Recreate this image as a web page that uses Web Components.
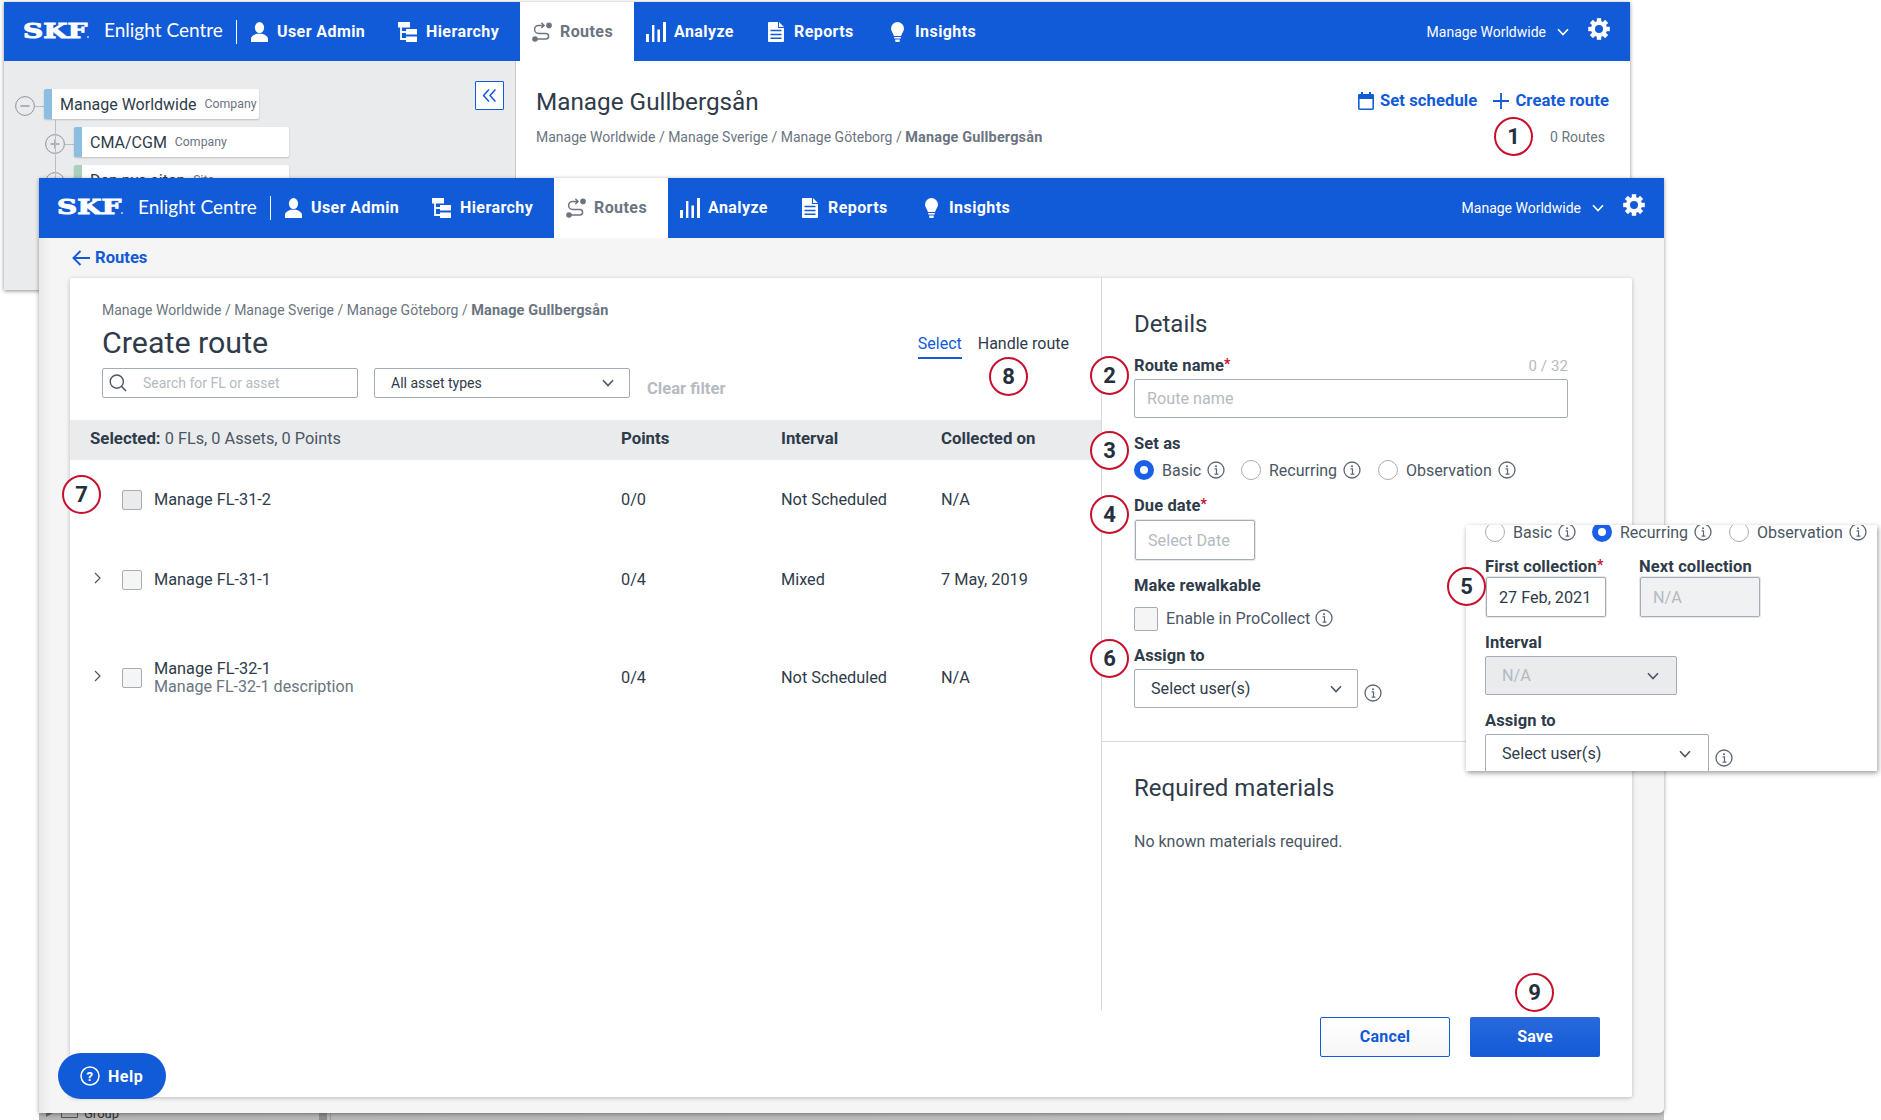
<!DOCTYPE html>
<html lang="en">
<head>
<meta charset="utf-8">
<title>Create route</title>
<style>
  html, body { margin: 0; background: #fff; }
  body { position: relative; width: 1881px; height: 1120px; overflow: hidden; font: 16px Roboto, "Liberation Sans", sans-serif; color: #2f3b4a; }
  .win { position: absolute; }
</style>
</head>
<body>

<!-- sliver of the third screenshot under the front window -->
<under-strip class="win" style="left:39px;top:1106px;width:1625px;height:14px"></under-strip>

<back-window class="win" style="left:4px;top:2px;width:1626px;height:288px"></back-window>

<create-route class="win" style="left:39px;top:178px;width:1625px;height:935px"></create-route>

<recurring-panel class="win" style="left:1466px;top:525px;width:411px;height:246px"></recurring-panel>

<note-badge n="1" style="left:1494px;top:117px"></note-badge>
<note-badge n="2" style="left:1090px;top:356px"></note-badge>
<note-badge n="3" style="left:1090px;top:431px"></note-badge>
<note-badge n="4" style="left:1090px;top:495px"></note-badge>
<note-badge n="5" style="left:1447px;top:567px"></note-badge>
<note-badge n="6" style="left:1090px;top:639px"></note-badge>
<note-badge n="7" style="left:62px;top:475px"></note-badge>
<note-badge n="8" style="left:989px;top:357px"></note-badge>
<note-badge n="9" style="left:1515px;top:973px"></note-badge>

<script>
const ICONS = {
  user: '<svg viewBox="0 0 17 20"><ellipse cx="8.5" cy="5.6" rx="4.6" ry="5.6" fill="currentColor"/><path d="M0 20v-3.2c0-2.6 3.4-4 5.6-5h5.8c2.2 1 5.6 2.4 5.6 5V20z" fill="currentColor"/></svg>',
  hierarchy: '<svg viewBox="0 0 20 20"><rect width="12" height="5.5" fill="currentColor"/><path d="M3 5v12h6M3 10h6" fill="none" stroke="currentColor" stroke-width="1.8"/><rect x="8" y="7" width="11" height="5.5" fill="currentColor"/><rect x="8" y="14.5" width="11" height="5.5" fill="currentColor"/></svg>',
  routes: '<svg viewBox="0 0 20 20"><circle cx="17" cy="3.4" r="2.8" fill="currentColor"/><circle cx="3" cy="17" r="2.8" fill="currentColor"/><path d="M12 3.4H6.6a4 4 0 0 0 0 8h7.2a2.8 2.8 0 0 1 0 5.6H5M9.4 .8 12 3.4 9.4 6" fill="none" stroke="currentColor" stroke-width="1.5"/></svg>',
  analyze: '<svg viewBox="0 0 20 20"><path d="M0 12h3v8H0zM6 3h2.4v17H6zM11.4 7.5h2.6V20h-2.6zM17 0h3v20h-3z" fill="currentColor"/></svg>',
  reports: '<svg viewBox="0 0 16 20"><path d="M1 0h9v6h6v13a1 1 0 0 1-1 1H1a1 1 0 0 1-1-1V1a1 1 0 0 1 1-1zM11 0l5 5h-5z" fill="currentColor"/><path d="M2.5 8.6h11M2.5 12.4h11M2.5 16.2h11" stroke="#115ad8" stroke-width="1.5"/></svg>',
  insights: '<svg viewBox="0 0 13 20"><path d="M6.5 0a6.5 6.5 0 0 1 6.5 6.5c0 3-2.3 4.5-2.9 7.5H2.900C2.300 11 0 9.500 0 6.500A6.500 6.500 0 0 1 6.500 0zM3.200 15h6.600v1.500H3.200zM4.200 17.500h4.600V19a1 1 0 0 1-1 1H5.200a1 1 0 0 1-1-1z" fill="currentColor"/></svg>',
  gear: '<svg viewBox="-11 -11 22 22"><circle r="6" fill="none" stroke="currentColor" stroke-width="4"/>' +
    [0, 45, 90, 135, 180, 225, 270, 315].map(a => `<rect x="-2.200" y="-10.800" width="4.400" height="4.500" fill="currentColor" transform="rotate(${a})"/>`).join('') + '</svg>',
  chevron: '<svg viewBox="0 0 12 8"><path d="M1 1.200 6 6.500 11 1.200" fill="none" stroke="currentColor" stroke-width="1.600"/></svg>',
  right: '<svg viewBox="0 0 7 12"><path d="M1 1l5 5-5 5" fill="none" stroke="currentColor" stroke-width="1.200"/></svg>',
  info: '<svg viewBox="0 0 18 18"><circle cx="9" cy="9" r="8" fill="none" stroke="currentColor" stroke-width="1.300"/><circle cx="9" cy="5.200" r="1" fill="currentColor"/><path d="M7.600 7.800H9.500V13M7.600 13.200h3.800" fill="none" stroke="currentColor" stroke-width="1.200"/></svg>',
  search: '<svg viewBox="0 0 18 18"><circle cx="7.800" cy="7.600" r="6.600" fill="none" stroke="currentColor" stroke-width="1.400"/><path d="M12.600 12.500 17 17" stroke="currentColor" stroke-width="1.500"/></svg>',
  calendar: '<svg viewBox="0 0 16 18"><rect x=".8" y="2.800" width="14.400" height="14.400" rx="1" fill="none" stroke="currentColor" stroke-width="1.600"/><path d="M0 2.500h16V7H0zM3 0h2v3H3zM11 0h2v3h-2z" fill="currentColor"/></svg>',
  plus: '<svg viewBox="0 0 16 16"><path d="M8 0v16M0 8h16" stroke="currentColor" stroke-width="1.800"/></svg>',
  back: '<svg viewBox="0 0 18 16"><path d="M18 8H1.500M8.500 1 1.500 8l7 7" fill="none" stroke="currentColor" stroke-width="1.900"/></svg>',
  collapse: '<svg viewBox="0 0 14 14"><path d="M6.500 1.500 1.500 7l5 5.500M12.500 1.500 7.500 7l5 5.500" fill="none" stroke="currentColor" stroke-width="1.400"/></svg>'
};

class UiIcon extends HTMLElement {
  connectedCallback() {
    const w = this.getAttribute('w') || 16;
    const h = this.getAttribute('h') || w;
    this.attachShadow({ mode: 'open' }).innerHTML = `
      <style>
        :host { display: inline-flex; flex: none; width: ${w}px; height: ${h}px; }
        svg { width: 100%; height: 100%; display: block; }
      </style>${ICONS[this.getAttribute('name')]}`;
  }
}
customElements.define('ui-icon', UiIcon);

class NoteBadge extends HTMLElement {
  connectedCallback() {
    this.attachShadow({ mode: 'open' }).innerHTML = `
      <style>
        :host {
          position: absolute; width: 39px; height: 39px; box-sizing: border-box;
          display: flex; align-items: center; justify-content: center;
          border: 2px solid #c8102e; border-radius: 50%; background: #fff;
          font: 700 22px/1 Roboto, sans-serif; color: #26303d;
        }
      </style>${this.getAttribute('n')}`;
  }
}
customElements.define('note-badge', NoteBadge);

class NavItem extends HTMLElement {
  connectedCallback() {
    const w = this.getAttribute('iw') || 20;
    this.attachShadow({ mode: 'open' }).innerHTML = `
      <style>
        :host { display: flex; align-items: center; height: 100%; box-sizing: border-box; flex: none; white-space: nowrap; }
        :host([active]) { background: #fff; color: #6b7480; }
        span { padding-bottom: 1px; }
      </style>
      <ui-icon name="${this.getAttribute('icon')}" w="${w}" h="20"></ui-icon>
      <span><slot></slot></span>`;
  }
}
customElements.define('nav-item', NavItem);

class SkfNav extends HTMLElement {
  connectedCallback() {
    this.attachShadow({ mode: 'open' }).innerHTML = `
      <style>
        :host {
          display: flex; align-items: center; box-sizing: border-box; flex: none;
          height: var(--nav-h, 59px); padding: 0 var(--nav-pad, 20px);
          background: #115ad8; color: #fff;
          font: 700 16px Roboto, sans-serif; letter-spacing: .42px;
        }
        .logo { position: relative; width: 64px; height: 16px; flex: none; margin-top: -2px; }
        .logo span {
          display: block; font: 700 21px/16px "DejaVu Serif", serif; letter-spacing: 0;
          transform: scaleX(1.330); transform-origin: 0 50%; margin-left: -1px;
          -webkit-text-stroke: 1px #fff; white-space: nowrap;
        }
        .logo i { position: absolute; right: -1px; bottom: 1px; width: 2px; height: 2px; background: #c9d8f5; border-radius: 50%; }
        .name { margin: 0 0 4px 16px; width: 119px; flex: none; font: 400 19px Lato, sans-serif; letter-spacing: 0; white-space: nowrap; }
        .sep { margin-left: 13px; width: 1px; height: 24px; background: #fff; flex: none; }
        .users { margin-left: 14px; width: 114px; gap: 9px; }
        .hier { margin-left: 33px; width: 101px; gap: 8px; }
        .routes { margin-left: 21px; width: 114px; padding-left: 12px; gap: 8px; }
        .analyze { margin-left: 12px; width: 88px; gap: 8px; }
        .reports { margin-left: 34px; width: 87px; gap: 10px; }
        .insights { margin-left: 36px; width: 86px; gap: 11px; }
        .org { margin-left: auto; font: 400 14px Roboto, sans-serif; letter-spacing: 0; }
        .chev { margin: 0 19px 0 11px; }
        .gear { margin-top: -6px; }
      </style>
      <div class="logo"><span>SKF</span><i></i></div>
      <span class="name">Enlight Centre</span>
      <span class="sep"></span>
      <nav-item class="users" icon="user" iw="17">User Admin</nav-item>
      <nav-item class="hier" icon="hierarchy">Hierarchy</nav-item>
      <nav-item class="routes" icon="routes" active>Routes</nav-item>
      <nav-item class="analyze" icon="analyze">Analyze</nav-item>
      <nav-item class="reports" icon="reports" iw="16">Reports</nav-item>
      <nav-item class="insights" icon="insights" iw="13">Insights</nav-item>
      <span class="org">Manage Worldwide</span>
      <ui-icon class="chev" name="chevron" w="12" h="8"></ui-icon>
      <ui-icon class="gear" name="gear" w="22"></ui-icon>`;
  }
}
customElements.define('skf-nav', SkfNav);

class TreeNode extends HTMLElement {
  connectedCallback() {
    const tag = this.getAttribute('toggle') || '+';
    const strip = this.getAttribute('strip') || '#8bbee0';
    const bar = tag === '-' ? '<path d="M5.500 10h9" stroke="#9aa1aa" stroke-width="1.600"/>' :
      '<path d="M5.500 10h9M10 5.500v9" stroke="#9aa1aa" stroke-width="1.600"/>';
    this.attachShadow({ mode: 'open' }).innerHTML = `
      <style>
        :host { display: flex; align-items: center; height: 30px; }
        svg { width: 20px; height: 20px; flex: none; margin-top: 4px; }
        .link { width: 9px; height: 1px; background: #b9bec5; flex: none; margin-top: 4px; }
        .card {
          display: flex; align-items: center; height: 30px; width: var(--w, 215px); box-sizing: border-box;
          padding-left: 8px; gap: 8px; background: #fff; border-left: 8px solid ${strip}; border-radius: 2px;
          box-shadow: 0 1px 2px rgba(0,0,0,.2); color: #2f3b4a; font-size: 16px; white-space: nowrap;
        }
        small { font-size: 12.300px; color: #6b7480; }
      </style>
      <svg viewBox="0 0 20 20"><circle cx="10" cy="10" r="9.400" fill="#e9ebed" stroke="#8d949d"/>${bar}</svg>
      <span class="link"></span>
      <div class="card"><slot></slot><small>${this.getAttribute('kind')}</small></div>`;
  }
}
customElements.define('tree-node', TreeNode);

class BackWindow extends HTMLElement {
  connectedCallback() {
    this.attachShadow({ mode: 'open' }).innerHTML = `
      <style>
        :host { display: flex; flex-direction: column; background: #fff; box-shadow: 0 1px 4px rgba(0,0,0,.45); font-family: Roboto, sans-serif; color: #2f3b4a; }
        .body { display: flex; flex: 1; min-height: 0; }
        .side { position: relative; width: 512px; flex: none; box-sizing: border-box; padding: 28px 0 0 11px; background: #e9ebed; border-right: 1px solid #c6cacf; overflow: hidden; }
        .rail { position: absolute; left: 50.500px; top: 58px; width: 1px; height: 60px; background: #b9bec5; }
        tree-node + tree-node { margin: 8px 0 0 30px; }
        .collapse { position: absolute; left: 471px; top: 20px; width: 29px; height: 29px; box-sizing: border-box; display: flex; align-items: center; justify-content: center; background: #fff; border: 1px solid #115ad8; color: #115ad8; border-radius: 1px; }
        .main { flex: 1; display: flex; justify-content: space-between; padding: 27px 21px 0 20px; }
        h1 { margin: 0; font: 400 24.300px/28px Roboto, sans-serif; }
        .crumb { margin-top: 12px; font-size: 14px; line-height: 18px; color: #6b7480; }
        b { font-weight: 700; font-size: 14.500px; line-height: 0; letter-spacing: .15px; }
        .actions { display: flex; gap: 16px; color: #115ad8; font-size: 16.600px; font-weight: 700; letter-spacing: .1px; line-height: 24px; margin-top: 1px; }
        .actions span { display: flex; align-items: center; gap: 6px; }
        .count { margin: 15px 4px 0 0; text-align: right; font-size: 14px; line-height: 18px; color: #6b7480; }
      </style>
      <skf-nav></skf-nav>
      <div class="body">
        <div class="side">
          <div class="rail"></div>
          <tree-node toggle="-" kind="Company">Manage Worldwide</tree-node>
          <tree-node kind="Company">CMA/CGM</tree-node>
          <tree-node kind="Site" strip="#a9d0bd">Den nye siten</tree-node>
          <div class="collapse"><ui-icon name="collapse" w="15"></ui-icon></div>
        </div>
        <div class="main">
          <div>
            <h1>Manage Gullbergsån</h1>
            <div class="crumb">Manage Worldwide / Manage Sverige / Manage Göteborg / <b>Manage Gullbergsån</b></div>
          </div>
          <div>
            <div class="actions">
              <span><ui-icon name="calendar" w="16" h="18"></ui-icon>Set schedule</span>
              <span><ui-icon name="plus" w="16"></ui-icon>Create route</span>
            </div>
            <div class="count">0 Routes</div>
          </div>
        </div>
      </div>`;
  }
}
customElements.define('back-window', BackWindow);

class FieldBox extends HTMLElement {
  connectedCallback() {
    const arrow = this.hasAttribute('chevron') ? '<ui-icon name="chevron" w="12" h="8"></ui-icon>' : '';
    this.attachShadow({ mode: 'open' }).innerHTML = `
      <style>
        :host {
          display: flex; align-items: center; justify-content: space-between; box-sizing: border-box; flex: none;
          height: var(--h, 40px); padding: 0 var(--pr, 16px) 0 var(--pl, 12px);
          border: 1px solid #a6acb5; border-radius: 2px; background: #fff; color: #2f3b4a;
          font-size: var(--fs, 16.200px); white-space: nowrap;
        }
        :host([muted]) { color: #b4bac1; }
        ui-icon { color: #4b5663; }
      </style>
      <span><slot></slot></span>${arrow}`;
  }
}
customElements.define('field-box', FieldBox);

class FieldLabel extends HTMLElement {
  connectedCallback() {
    const star = this.hasAttribute('required') ? '<i>*</i>' : '';
    const counter = this.getAttribute('counter');
    this.attachShadow({ mode: 'open' }).innerHTML = `
      <style>
        :host { display: flex; justify-content: space-between; height: 20px; font: 700 16.500px/20px Roboto, sans-serif; letter-spacing: .1px; color: #2f3b4a; white-space: nowrap; }
        i { font-style: normal; color: #c8102e; font-size: 14px; position: relative; top: -2px; }
        em { font: 400 15px/20px Roboto, sans-serif; color: #b4bac1; }
      </style>
      <span><slot></slot>${star}</span>${counter ? `<em>${counter}</em>` : ''}`;
  }
}
customElements.define('field-label', FieldLabel);

class UiRadio extends HTMLElement {
  connectedCallback() {
    this.attachShadow({ mode: 'open' }).innerHTML = `
      <style>
        :host { display: flex; align-items: center; flex: none; height: 20px; color: #4b5663; white-space: nowrap; }
        .dot { width: 20px; height: 20px; box-sizing: border-box; border-radius: 50%; border: 1px solid #a6acb5; background: #fff; margin-right: 8px; flex: none; }
        :host([on]) .dot { border: 6px solid #1a5fe8; }
        ui-icon { margin-left: 6px; color: #5b6673; }
      </style>
      <span class="dot"></span><slot></slot><ui-icon name="info" w="18"></ui-icon>`;
  }
}
customElements.define('ui-radio', UiRadio);

class RadioGroup extends HTMLElement {
  connectedCallback() {
    const on = this.getAttribute('value');
    this.attachShadow({ mode: 'open' }).innerHTML = `
      <style>
        :host { display: flex; height: 20px; }
        .b { width: 107px; } .r { width: 137px; }
      </style>
      <ui-radio class="b" ${on === 'basic' ? 'on' : ''}>Basic</ui-radio>
      <ui-radio class="r" ${on === 'recurring' ? 'on' : ''}>Recurring</ui-radio>
      <ui-radio ${on === 'observation' ? 'on' : ''}>Observation</ui-radio>`;
  }
}
customElements.define('radio-group', RadioGroup);

class RouteRow extends HTMLElement {
  connectedCallback() {
    const a = n => this.getAttribute(n);
    const desc = a('desc') ? `<div class="desc">${a('desc')}</div>` : '';
    const chev = this.hasAttribute('expand') ? '<ui-icon name="right" w="7" h="12"></ui-icon>' : '';
    this.attachShadow({ mode: 'open' }).innerHTML = `
      <style>
        :host {
          display: grid; grid-template-columns: 52px 32px 467px 160px 160px 1fr; align-items: center;
          height: var(--row, 80px); color: #2f3b4a; font-size: 16.300px; line-height: 18px;
        }
        .arrow { padding: 0 0 4px 24px; color: #4b5663; line-height: 0; }
        .box { width: 20px; height: 20px; box-sizing: border-box; border: 1px solid #a6acb5; border-radius: 2px; background: #f5f5f5; }
        :host([dim]) .box { background: #e9ebed; }
        .desc { color: #6b7480; font-size: 16.100px; }
      </style>
      <div class="arrow">${chev}</div>
      <div class="box"></div>
      <div class="name"><slot></slot>${desc}</div>
      <div>${a('points')}</div>
      <div>${a('interval')}</div>
      <div>${a('collected')}</div>`;
  }
}
customElements.define('route-row', RouteRow);

class CreateRoute extends HTMLElement {
  connectedCallback() {
    this.attachShadow({ mode: 'open' }).innerHTML = `
      <style>
        :host {
          display: flex; flex-direction: column; --nav-h: 60px; --nav-pad: 19px;
          background: linear-gradient(90deg, #e9e9e9, #f5f5f5 12px); border-radius: 0 0 5px 0;
          box-shadow: 0 1px 4px rgba(0,0,0,.4); font-family: Roboto, sans-serif; color: #2f3b4a;
        }
        .back { display: flex; align-items: center; gap: 5px; height: 40px; padding: 0 0 1px 33px; box-sizing: border-box; color: #115ad8; font-weight: 700; font-size: 16.600px; flex: none; }
        .card { flex: 1; display: flex; margin: 0 32px 16px 31px; background: #fff; border-radius: 2px; box-shadow: 0 1px 4px rgba(0,0,0,.25); min-height: 0; }
        .left { width: 1032px; height: 732px; box-sizing: border-box; border-right: 1px solid #d5d8dc; flex: none; }
        .head { padding: 23px 32px 0 32px; }
        .crumb { font-size: 14px; line-height: 18px; color: #6b7480; }
        b { font-weight: 700; font-size: 14.500px; line-height: 0; letter-spacing: .15px; }
        .title { display: flex; justify-content: space-between; height: 36px; margin-top: 6px; }
        h1 { margin: 0; font: 400 30.400px/36px Roboto, sans-serif; }
        .tabs { display: flex; gap: 16px; margin-top: 8px; font-size: 16px; line-height: 22px; height: 26px; }
        .tabs span:first-child { color: #115ad8; border-bottom: 2px solid #115ad8; padding-bottom: 2px; }
        .filters { display: flex; align-items: flex-start; gap: 16px; margin-top: 7px; --h: 30px; --fs: 14px; }
        .search ui-icon { color: #4b5663; margin-right: 16px; }
        .search span { color: #b4bac1; font-size: 14px; }
        .search { display: flex; align-items: center; box-sizing: border-box; width: 256px; height: 30px; border: 1px solid #a6acb5; border-radius: 2px; padding-left: 6px; }
        .type { width: 256px; --pl: 16px; --pr: 15px; }
        .clear { margin: 11px 0 0 1px; color: #b6bbc2; font-weight: 700; font-size: 16.600px; white-space: nowrap; }
        .thead { display: grid; grid-template-columns: 531px 160px 160px 1fr; align-items: center; height: 40px; box-sizing: border-box; margin-top: 22px; padding: 0 0 5px 20px; background: #e9ebed; font-weight: 700; font-size: 16.800px; }
        .thead .sel { font-weight: 400; color: #4b5663; font-size: 16.300px; }
        .right { flex: 1; display: flex; flex-direction: column; min-width: 0; }
        .details { height: 464px; box-sizing: border-box; padding: 32px 0 0 32px; border-bottom: 1px solid #d5d8dc; flex: none; }
        h2 { margin: 0; font: 400 24px/28px Roboto, sans-serif; }
        .w434 { width: 434px; }
        .rew { display: flex; align-items: center; height: 24px; margin-top: 11px; color: #4b5663; font-size: 16.200px; }
        .rew span { padding-bottom: 2px; }
        .chk { width: 24px; height: 24px; box-sizing: border-box; border: 1px solid #a6acb5; border-radius: 2px; background: #f5f5f5; margin-right: 8px; }
        .rew ui-icon { margin: 0 0 3px 5px; color: #5b6673; }
        .assign { display: flex; align-items: center; margin-top: 3px; }
        .assign ui-icon.i { margin: 8px 0 0 6px; color: #5b6673; }
        .materials { padding: 32px 0 0 32px; }
        .materials p { margin: 30px 0 0; line-height: 20px; color: #4b5663; }
        .foot { margin-top: auto; display: flex; justify-content: flex-end; gap: 20px; padding: 0 32px 40px 0; }
        .btn { width: 130px; height: 40px; box-sizing: border-box; display: flex; align-items: center; justify-content: center; padding-bottom: 1px; border-radius: 2px; font-weight: 700; letter-spacing: .2px; }
        .cancel { border: 1px solid #115ad8; color: #115ad8; background: linear-gradient(#fff, #f6f6f6); }
        .save { color: #fff; background: linear-gradient(#2a69dc, #115ad8); }
        .help { position: absolute; left: 19px; top: 875px; width: 108px; height: 46px; display: flex; align-items: center; gap: 8px; padding-left: 22px; box-sizing: border-box; background: #115ad8; border-radius: 23px; color: #fff; font-weight: 700; letter-spacing: .5px; }
        .help svg { width: 20px; height: 20px; flex: none; }
      </style>
      <skf-nav></skf-nav>
      <div class="back"><ui-icon name="back" w="18" h="16"></ui-icon>Routes</div>
      <div class="card">
        <div class="left">
          <div class="head">
            <div class="crumb">Manage Worldwide / Manage Sverige / Manage Göteborg / <b>Manage Gullbergsån</b></div>
            <div class="title">
              <h1>Create route</h1>
              <div class="tabs"><span>Select</span><span>Handle route</span></div>
            </div>
            <div class="filters">
              <div class="search"><ui-icon name="search" w="18"></ui-icon><span>Search for FL or asset</span></div>
              <field-box class="type" chevron>All asset types</field-box>
              <div class="clear">Clear filter</div>
            </div>
          </div>
          <div class="thead">
            <div>Selected: <span class="sel">0 FLs, 0 Assets, 0 Points</span></div>
            <div>Points</div><div>Interval</div><div>Collected on</div>
          </div>
          <route-row dim points="0/0" interval="Not Scheduled" collected="N/A">Manage FL-31-2</route-row>
          <route-row expand points="0/4" interval="Mixed" collected="7 May, 2019">Manage FL-31-1</route-row>
          <route-row expand style="--row:116px" desc="Manage FL-32-1 description" points="0/4" interval="Not Scheduled" collected="N/A">Manage FL-32-1</route-row>
        </div>
        <div class="right">
          <div class="details">
            <h2>Details</h2>
            <field-label required counter="0 / 32" class="w434" style="margin-top:18px">Route name</field-label>
            <field-box muted class="w434" style="margin-top:3px;--h:39px">Route name</field-box>
            <field-label style="margin-top:16px">Set as</field-label>
            <radio-group value="basic" style="margin-top:6px"></radio-group>
            <field-label required style="margin-top:16px">Due date</field-label>
            <field-box muted style="margin:4px 0 0 1px;width:120px;box-shadow:0 0 0 1px #e6e7e9">Select Date</field-box>
            <field-label style="margin-top:16px">Make rewalkable</field-label>
            <div class="rew"><div class="chk"></div><span>Enable in ProCollect</span><ui-icon name="info" w="18"></ui-icon></div>
            <field-label style="margin-top:15px">Assign to</field-label>
            <div class="assign">
              <field-box chevron style="width:224px;--h:39px;--pl:16px;--pr:15px">Select user(s)</field-box>
              <ui-icon class="i" name="info" w="18"></ui-icon>
            </div>
          </div>
          <div class="materials">
            <h2>Required materials</h2>
            <p>No known materials required.</p>
          </div>
          <div class="foot">
            <div class="btn cancel">Cancel</div>
            <div class="btn save">Save</div>
          </div>
        </div>
      </div>
      <div class="help">
        <svg viewBox="0 0 20 20"><circle cx="10" cy="10" r="9" fill="none" stroke="#fff" stroke-width="1.500"/><text x="10" y="14.500" text-anchor="middle" font-family="Roboto" font-weight="700" font-size="13" fill="#fff">?</text></svg>
        Help
      </div>`;
  }
}
customElements.define('create-route', CreateRoute);

class RecurringPanel extends HTMLElement {
  connectedCallback() {
    this.attachShadow({ mode: 'open' }).innerHTML = `
      <style>
        :host { background: #fff; box-shadow: 1px 2px 5px rgba(0,0,0,.4); overflow: hidden; font-family: Roboto, sans-serif; }
        .inner { padding: 0 0 0 19px; margin-top: -3px; }
        .dates { display: grid; grid-template-columns: 154px 120px; margin-top: 15px; }
        .dates field-box { width: 120px; margin: 0 0 0 1px; box-shadow: 0 0 0 1px #e6e7e9; }
        .off { background: #f0f1f2; }
        .interval { width: 192px; margin-top: 3px; --h: 39px; --pl: 16px; --pr: 17px; background: #e9ebed; }
        .assign { display: flex; margin-top: 3px; }
        .assign field-box { width: 224px; --pl: 16px; --pr: 17px; padding-bottom: 1px; }
        .assign ui-icon { margin: 15px 0 0 6px; color: #5b6673; }
      </style>
      <div class="inner">
        <radio-group value="recurring"></radio-group>
        <div class="dates">
          <field-label required>First collection</field-label>
          <field-label>Next collection</field-label>
          <field-box>27 Feb, 2021</field-box>
          <field-box class="off" muted>N/A</field-box>
        </div>
        <field-label style="margin-top:16px">Interval</field-label>
        <field-box class="interval" muted chevron>N/A</field-box>
        <field-label style="margin-top:16px">Assign to</field-label>
        <div class="assign">
          <field-box chevron>Select user(s)</field-box>
          <ui-icon name="info" w="18"></ui-icon>
        </div>
      </div>`;
  }
}
customElements.define('recurring-panel', RecurringPanel);

class UnderStrip extends HTMLElement {
  connectedCallback() {
    this.attachShadow({ mode: 'open' }).innerHTML = `
      <style>
        :host { display: flex; align-items: center; background: linear-gradient(90deg, #b4b4b4, #bcbcbc 60%, #c4c4c4); overflow: hidden; font: 13px Roboto, sans-serif; color: #333; }
        .tri { margin-left: 7px; border-left: 7px solid #666; border-top: 4px solid transparent; border-bottom: 4px solid transparent; }
        .box { margin-left: 8px; width: 17px; height: 10px; border: 1px solid #555; box-sizing: border-box; }
        .txt { margin-left: 6px; }
        .bar { margin-left: 200px; width: 8px; height: 100%; background: #8c8c8c; }
        .ln { margin-left: 3px; width: 1px; height: 100%; background: #999; }
      </style>
      <span class="tri"></span><span class="box"></span><span class="txt">Group</span>
      <span class="bar"></span><span class="ln"></span>`;
  }
}
customElements.define('under-strip', UnderStrip);
</script>
</body>
</html>
